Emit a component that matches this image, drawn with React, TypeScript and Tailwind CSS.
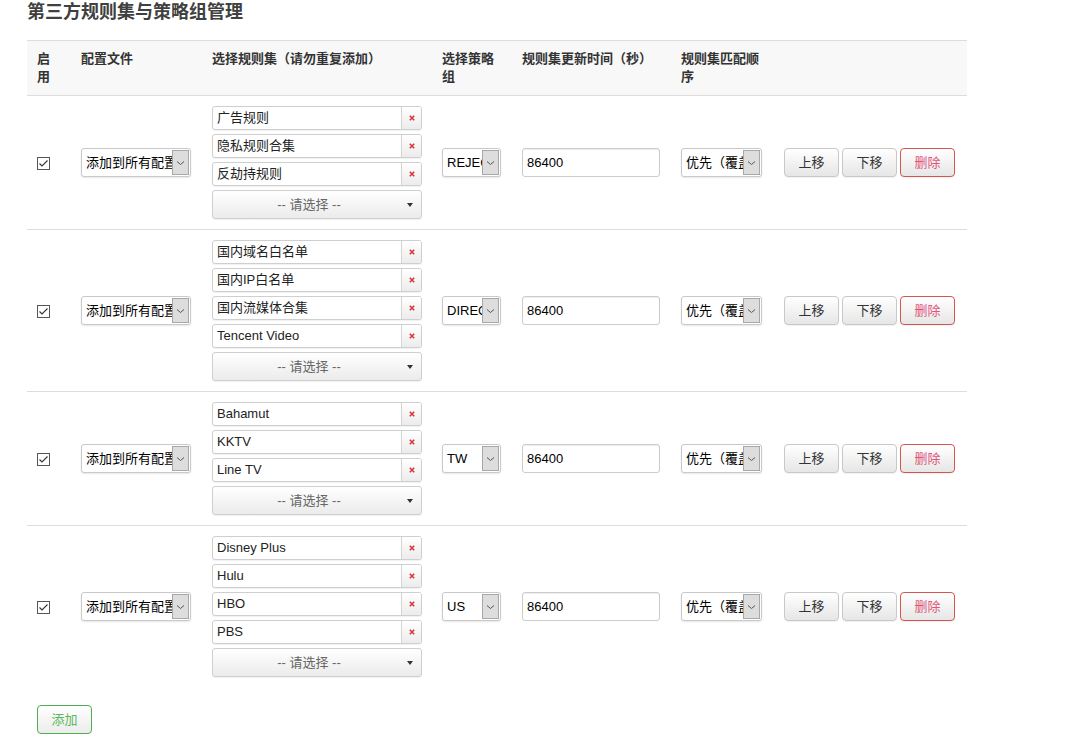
import React from "react";

type Row = { rules: string[]; group: string };

const rows: Row[] = [
  { rules: ["广告规则", "隐私规则合集", "反劫持规则"], group: "REJECT" },
  { rules: ["国内域名白名单", "国内IP白名单", "国内流媒体合集", "Tencent Video"], group: "DIRECT" },
  { rules: ["Bahamut", "KKTV", "Line TV"], group: "TW" },
  { rules: ["Disney Plus", "Hulu", "HBO", "PBS"], group: "US" },
];

const grid = "grid grid-cols-[44px_131px_230px_80px_159px_103px_193px]";

function Chevron() {
  return (
    <svg width="9" height="6" viewBox="0 0 9 6">
      <path d="M1 1.5 L4.5 4.5 L8 1.5" fill="none" stroke="#555" strokeWidth="1" />
    </svg>
  );
}

function Sel({ cls, text }: { cls: string; text: string }) {
  return (
    <div className={`flex h-[29px] items-stretch overflow-hidden rounded-[3px] border border-[#c9c9c9] bg-white shadow-[0_1px_2px_rgba(0,0,0,0.1)] ${cls}`}>
      <div className="flex-1 overflow-hidden whitespace-nowrap pl-[4px] text-[13px] leading-[27px] text-black">{text}</div>
      <div className="my-[1px] mr-[1px] flex w-[17px] shrink-0 items-center justify-center border border-[#a8a8a8] bg-[#dddddd]">
        <Chevron />
      </div>
    </div>
  );
}

function Check() {
  return (
    <svg width="13" height="13" viewBox="0 0 13 13">
      <rect x="0.5" y="0.5" width="12" height="12" fill="#fff" stroke="#555" />
      <path d="M2.5 6.5 L5 9 L10.5 3.5" fill="none" stroke="#333" strokeWidth="1.1" />
    </svg>
  );
}

function Btn({ children, danger }: { children: React.ReactNode; danger?: boolean }) {
  return (
    <button
      className={`h-[29px] w-[55px] rounded-[4px] border bg-[linear-gradient(to_bottom,#ffffff,#e6e6e6)] text-[13px] leading-[27px] shadow-[0_1px_1px_rgba(0,0,0,0.06)] ${
        danger ? "border-[#d9534f] text-[#e0567a]" : "border-[#c8c8c8] text-[#333]"
      }`}
    >
      {children}
    </button>
  );
}

function RuleItem({ text }: { text: string }) {
  return (
    <div className="flex h-[24px] items-stretch overflow-hidden rounded-[3px] border border-[#cfcfcf] bg-white shadow-[0_1px_1px_rgba(0,0,0,0.06)]">
      <div className="flex-1 pl-[4px] text-[13px] leading-[22px] text-[#222]">{text}</div>
      <div className="flex w-[20px] items-center justify-center border-l border-[#d4d4d4] bg-[linear-gradient(to_bottom,#ffffff,#ececec)]">
        <svg width="6" height="6" viewBox="0 0 6 6">
          <path d="M0.8 0.8 L5.2 5.2 M5.2 0.8 L0.8 5.2" stroke="#d9363e" strokeWidth="1.6" />
        </svg>
      </div>
    </div>
  );
}

function Picker() {
  return (
    <div className="relative flex h-[29px] items-center justify-center rounded-[3px] border border-[#cfcfcf] bg-[linear-gradient(to_bottom,#ffffff,#ebebeb)] pl-[8px] pr-[24px] text-[13px] text-[#666] shadow-[0_1px_1px_rgba(0,0,0,0.06)]">
      -- 请选择 --
      <svg className="absolute right-[8px] top-[12px]" width="6" height="4" viewBox="0 0 6 4">
        <path d="M0 0 L6 0 L3 4 Z" fill="#333" />
      </svg>
    </div>
  );
}

export default function App() {
  return (
    <div
      className="min-h-[737px] bg-white pl-[27px]"
      style={{ fontFamily: '"Liberation Sans", Arial, "Noto Sans CJK SC", sans-serif' }}
    >
      <div className="mb-[15px] text-[18px] font-bold leading-[25px] text-[#404040]">第三方规则集与策略组管理</div>
      <div className="w-[940px]">
        <div className={`${grid} border-y border-[#dddddd] bg-[#f8f8f8] text-[13px] font-bold leading-[18px] text-[#333]`}>
          <div className="px-[10px] py-[9px]">启用</div>
          <div className="px-[10px] py-[9px]">配置文件</div>
          <div className="px-[10px] py-[9px]">选择规则集（请勿重复添加）</div>
          <div className="px-[10px] py-[9px]">选择策略组</div>
          <div className="px-[10px] py-[9px]">规则集更新时间（秒）</div>
          <div className="px-[10px] py-[9px]">规则集匹配顺序</div>
          <div className="px-[10px] py-[9px]"></div>
        </div>
        {rows.map((r, i) => (
          <div key={i} className={`${grid} items-center ${i > 0 ? "border-t border-[#dddddd]" : ""}`}>
            <div className="flex px-[10px] py-[10px] pt-[12px]">
              <Check />
            </div>
            <div className="px-[10px] py-[10px]">
              <Sel cls="w-[110px]" text="添加到所有配置文件" />
            </div>
            <div className="flex flex-col gap-[4px] px-[10px] py-[10px]">
              {r.rules.map((t) => (
                <RuleItem key={t} text={t} />
              ))}
              <Picker />
            </div>
            <div className="px-[10px] py-[10px]">
              <Sel cls="w-[59px]" text={r.group} />
            </div>
            <div className="px-[10px] py-[10px]">
              <div className="h-[29px] w-[138px] rounded-[3px] border border-[#cccccc] bg-white pl-[4px] text-[13px] leading-[27px] text-black shadow-[inset_0_1px_1px_rgba(0,0,0,0.075)]">
                86400
              </div>
            </div>
            <div className="px-[10px] py-[10px]">
              <Sel cls="w-[81px]" text="优先（覆盖）" />
            </div>
            <div className="flex gap-[3px] px-[10px] py-[10px]">
              <Btn>上移</Btn>
              <Btn>下移</Btn>
              <Btn danger>删除</Btn>
            </div>
          </div>
        ))}
        <div className="mt-[18px] pl-[10px]">
          <button className="h-[29px] w-[55px] rounded-[4px] border border-[#4cae4c] bg-[linear-gradient(to_bottom,#ffffff,#ececec)] text-[13px] leading-[27px] text-[#5cb85c]">
            添加
          </button>
        </div>
      </div>
    </div>
  );
}
